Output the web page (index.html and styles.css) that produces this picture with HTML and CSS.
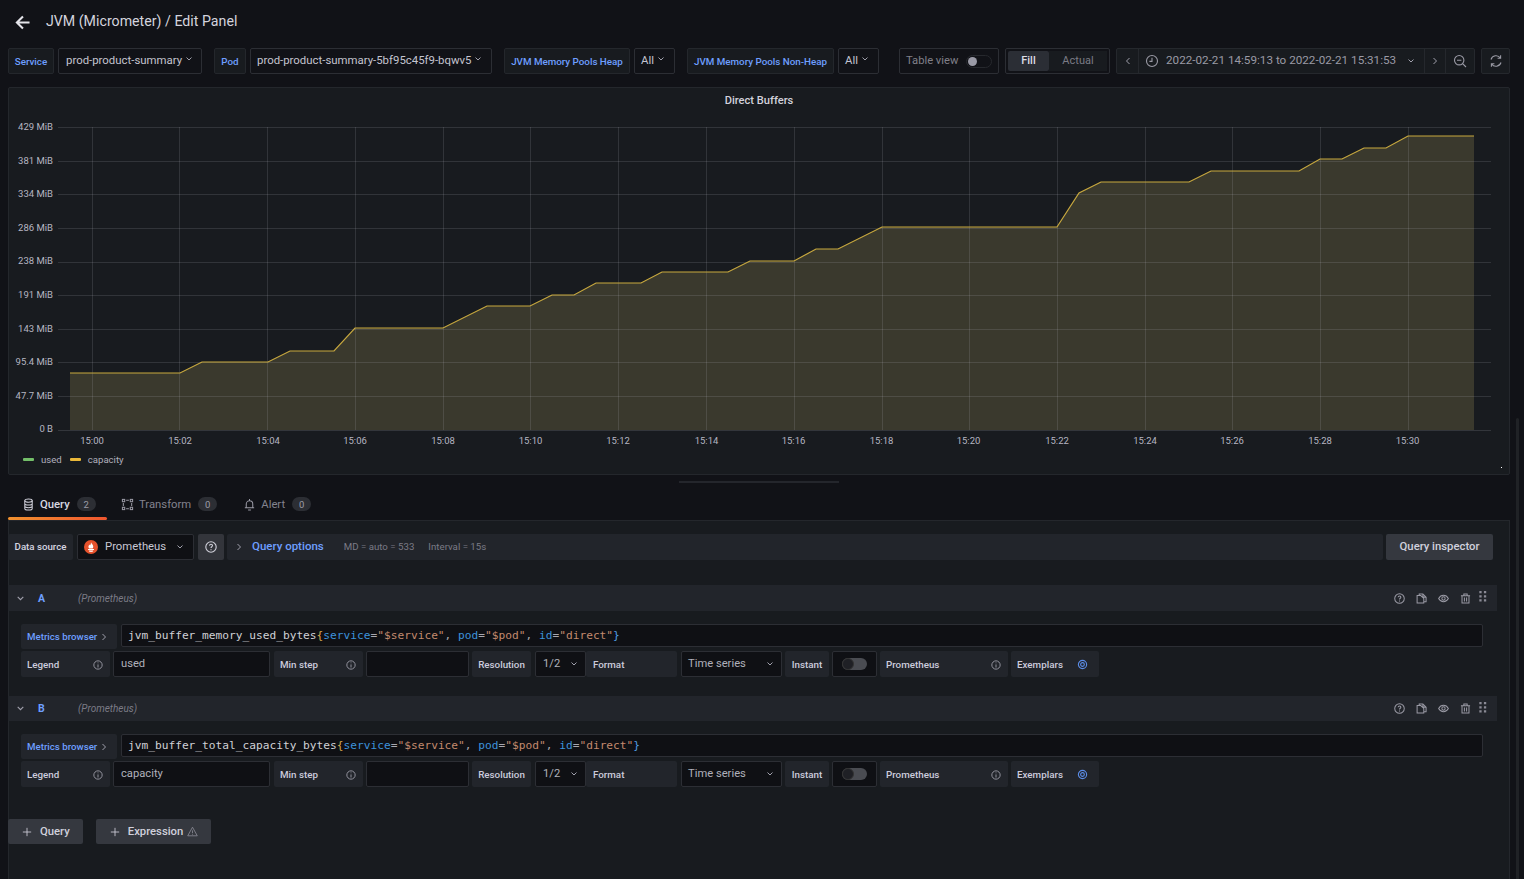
FILE: index.html
```html
<!DOCTYPE html>
<html lang="en">
<head>
<meta charset="utf-8">
<title>JVM (Micrometer) / Edit Panel</title>
<link rel="stylesheet" href="styles.css">
</head>
<body>
<div class="app">
  <header class="topbar">
    <svg class="back" viewBox="0 0 16 16"><path d="M15.500 8H2M8.500 1.500 2 8l6.500 6.500" fill="none" stroke="#e4e4ea" stroke-width="2.200"/></svg>
    <h1 class="title">JVM (Micrometer) / Edit Panel</h1>
  </header>

  <div class="toolbar">
    <div class="vargroup"><span class="varlabel w46">Service</span><span class="select w144">prod-product-summary<svg class="caret" viewBox="0 0 8 8"><path d="M1.5 2.5 4 5l2.5-2.5"/></svg></span></div>
    <div class="vargroup"><span class="varlabel w32">Pod</span><span class="select w242">prod-product-summary-5bf95c45f9-bqwv5<svg class="caret" viewBox="0 0 8 8"><path d="M1.5 2.5 4 5l2.5-2.5"/></svg></span></div>
    <div class="vargroup"><span class="varlabel w126">JVM Memory Pools Heap</span><span class="select w41">All<svg class="caret" viewBox="0 0 8 8"><path d="M1.5 2.5 4 5l2.5-2.5"/></svg></span></div>
    <div class="vargroup"><span class="varlabel w147">JVM Memory Pools Non-Heap</span><span class="select w41">All<svg class="caret" viewBox="0 0 8 8"><path d="M1.5 2.5 4 5l2.5-2.5"/></svg></span></div>
    <div class="tableview"><span class="tv-text">Table view</span><span class="switch"><span class="knob"></span></span></div>
    <div class="radio"><span class="radio-on"><span class="up1">Fill</span></span><span class="radio-off"><span class="up1">Actual</span></span></div>
    <div class="timepicker">
      <span class="tp-cell tp-arrow"><svg class="chev" viewBox="0 0 8 10"><path d="M5.5 2 2.5 5l3 3"/></svg></span>
      <span class="tp-cell tp-range">
        <svg class="ico14" viewBox="0 0 14 14"><circle cx="7" cy="7" r="5.5"/><path d="M7 3.8V7.4H4.4"/></svg>
        <span class="tp-text up1">2022-02-21 14:59:13 to 2022-02-21 15:31:53</span>
        <svg class="caret tp-caret" viewBox="0 0 8 8"><path d="M1.5 2.5 4 5l2.5-2.5"/></svg>
      </span>
      <span class="tp-cell tp-arrow2"><svg class="chev" viewBox="0 0 8 10"><path d="M2.5 2l3 3-3 3"/></svg></span>
      <span class="tp-zoom"><svg class="ico14" viewBox="0 0 14 14"><circle cx="6.2" cy="6.2" r="4.7"/><path d="M4 6.2h4.4M9.6 9.6 13 13"/></svg></span>
    </div>
    <span class="refresh"><svg class="ico14" viewBox="0 0 14 14"><path d="M2 5.5A5.3 5.3 0 0 1 11.4 4M12 8.5A5.3 5.3 0 0 1 2.6 10M11.6 1.2V4.2H8.6M2.4 12.8V9.8H5.4"/></svg></span>
  </div>

  <section class="panel">
    <div class="panel-title">Direct Buffers</div>
    <svg class="chart" viewBox="9 118 1500 330">
      <path class="area" d="M70 430V373H180L202 362H268L290 351H334L355 328H443L487 306H530L552 295H574L596 283H641L662 272H728L750 261H794L816 249H838L882 227H1057L1079 193L1101 182H1189L1211 171H1299L1320 159H1342L1364 148H1386L1408 136H1474V430Z"/>
      <path class="grid" d="M58 127.5H1491M58 161.500H1491M58 194.500H1491M58 228.500H1491M58 262.500H1491M58 295.500H1491M58 329.500H1491M58 362.500H1491M58 396.500H1491"/>
      <path class="grid" d="M92.500 127V430M179.500 127V430M267.500 127V430M355.500 127V430M443.500 127V430M530.500 127V430M618.500 127V430M706.500 127V430M794.500 127V430M882.500 127V430M969.500 127V430M1057.500 127V430M1145.500 127V430M1232.500 127V430M1320.500 127V430M1408.500 127V430"/>
      <path class="axis" d="M58 430.500H1491"/>
      <path class="line" d="M70 373H180L202 362H268L290 351H334L355 328H443L487 306H530L552 295H574L596 283H641L662 272H728L750 261H794L816 249H838L882 227H1057L1079 193L1101 182H1189L1211 171H1299L1320 159H1342L1364 148H1386L1408 136H1474"/>
      <g class="ylabels">
        <text x="53" y="130">429 MiB</text><text x="53" y="164">381 MiB</text><text x="53" y="197">334 MiB</text><text x="53" y="231">286 MiB</text><text x="53" y="264">238 MiB</text><text x="53" y="298">191 MiB</text><text x="53" y="332">143 MiB</text><text x="53" y="365">95.4 MiB</text><text x="53" y="399">47.7 MiB</text><text x="53" y="432">0 B</text>
      </g>
      <g class="xlabels">
        <text x="92" y="444">15:00</text><text x="180" y="444">15:02</text><text x="268" y="444">15:04</text><text x="355" y="444">15:06</text><text x="443" y="444">15:08</text><text x="530.500" y="444">15:10</text><text x="618" y="444">15:12</text><text x="706.500" y="444">15:14</text><text x="793.500" y="444">15:16</text><text x="881.500" y="444">15:18</text><text x="968.500" y="444">15:20</text><text x="1057" y="444">15:22</text><text x="1145" y="444">15:24</text><text x="1232" y="444">15:26</text><text x="1320" y="444">15:28</text><text x="1407.500" y="444">15:30</text>
      </g>
    </svg>
    <div class="legend">
      <span class="swatch swatch-green"></span><span class="legend-name">used</span>
      <span class="swatch swatch-yellow"></span><span class="legend-name">capacity</span>
    </div>
    <span class="corner-dot"></span>
  </section>

  <div class="splitter"><span class="splitter-bar"></span></div>

  <nav class="tabs">
    <span class="tab tab-active">
      <svg class="ico13 ico-bright" viewBox="0 0 12 14"><ellipse cx="6" cy="2.800" rx="4" ry="1.800"/><path d="M2 2.800v8.400c0 1 1.800 1.800 4 1.800s4-.8 4-1.800V2.800M2 5.800c0 1 1.800 1.800 4 1.800s4-.8 4-1.800M2 8.600c0 1 1.800 1.800 4 1.800s4-.8 4-1.800"/></svg>
      <span class="tab-name-on">Query</span><span class="count">2</span>
    </span>
    <span class="tab">
      <svg class="ico13" viewBox="0 0 14 14"><path d="M5.500 2.500h3M2.500 5.500v3M11.500 5.500v3M5.500 11.500h3"/><rect x="1.500" y="1.500" width="2.500" height="2.500"/><rect x="10" y="1.500" width="2.500" height="2.500"/><rect x="1.500" y="10" width="2.500" height="2.500"/><rect x="10" y="10" width="2.500" height="2.500"/></svg>
      <span class="tab-name">Transform</span><span class="count">0</span>
    </span>
    <span class="tab">
      <svg class="ico13" viewBox="0 0 14 14"><path d="M3.500 10V6.500a3.500 3.500 0 0 1 7 0V10M2 10.500h10M5.500 12.800h3M7 1v2"/></svg>
      <span class="tab-name">Alert</span><span class="count">0</span>
    </span>
  </nav>

  <main class="editor">
    <div class="ds-row">
      <span class="ds-label"><span class="up1">Data source</span></span>
      <span class="ds-select">
        <svg class="prom" viewBox="0 0 16 16"><circle cx="8" cy="8" r="8" fill="#e6522c"/><path d="M8 2.500c.4 1.800 2.600 2.600 2.600 5.200 0 .9-.4 1.500-.8 1.900H5.900c-.5-.4-.8-1-.8-1.900 0-1.200.8-1.600 1.100-2.600.4.400.6.800.6 1.300C7.500 5.200 8 4.200 8 2.500Z" fill="#fff"/><path d="M4.600 10.300h6.800v1.200H4.600ZM5.600 12h4.800v.9c-.8 1-4 1-4.800 0Z" fill="#fff"/></svg>
        <span class="ds-name up1">Prometheus</span>
        <svg class="caret ds-caret" viewBox="0 0 8 8"><path d="M1.500 2.500 4 5l2.500-2.500"/></svg>
      </span>
      <span class="ds-help"><svg class="ico12 ico-bright" viewBox="0 0 12 12"><circle cx="6" cy="6" r="5.200"/><path d="M4.500 4.600C4.600 3.700 5.200 3.300 6 3.300s1.500.5 1.500 1.300C7.500 5.800 6 5.700 6 7M6 8.300v.9"/></svg></span>
      <div class="ds-options">
        <svg class="chev ds-chev" viewBox="0 0 8 10"><path d="M2.500 2l3 3-3 3"/></svg>
        <span class="ds-qo up1">Query options</span>
        <span class="ds-meta ds-meta-1 up1">MD = auto = 533</span>
        <span class="ds-meta up1">Interval = 15s</span>
      </div>
      <span class="btn btn-inspector"><span class="up1">Query inspector</span></span>
    </div>

    <section class="qrow">
      <div class="qhead">
        <svg class="caret qcaret" viewBox="0 0 8 8"><path d="M1.500 2.500 4 5l2.500-2.500"/></svg>
        <span class="qletter">A</span><span class="qds">(Prometheus)</span>
        <span class="qactions">
          <svg class="ico11" viewBox="0 0 12 12"><circle cx="6" cy="6" r="5.200"/><path d="M4.500 4.600C4.600 3.700 5.200 3.300 6 3.300s1.500.5 1.500 1.300C7.500 5.800 6 5.700 6 7M6 8.300v.9"/></svg>
          <svg class="ico11" viewBox="0 0 12 12"><path d="M3.500 2.800V1h4l3.500 3.500v5H8.500M1.200 2.800h4L8.500 6v5H1.200ZM7.500 1v3.500H11"/></svg>
          <svg class="ico11" viewBox="0 0 12 12"><path d="M.7 6C2 3.600 3.900 2.500 6 2.500S10 3.600 11.300 6C10 8.400 8.100 9.500 6 9.500S2 8.400.7 6Z"/><circle cx="6" cy="6" r="1.800"/></svg>
          <svg class="ico11" viewBox="0 0 12 12"><path d="M1 3h10M4.200 3V1.200h3.600V3M2.200 3v8h7.600V3M4.800 5v4.200M7.200 5v4.200"/></svg>
          <svg class="grip" viewBox="0 0 8 12"><path d="M0 0h2.500v2.500H0ZM5 0h2.500v2.500H5ZM0 4.500h2.500V7H0ZM5 4.500h2.500V7H5ZM0 9h2.500v2.500H0ZM5 9h2.500v2.500H5Z"/></svg>
        </span>
      </div>
      <div class="qbody">
        <div class="qline-code">
          <span class="metrics">Metrics browser<svg class="chev metrics-chev" viewBox="0 0 8 10"><path d="M2.500 2l3 3-3 3"/></svg></span>
          <code class="code"><span class="c-name">jvm_buffer_memory_used_bytes</span><span class="c-brace">{</span><span class="c-key">service</span>=<span class="c-val">"$service"</span>, <span class="c-key">pod</span>=<span class="c-val">"$pod"</span>, <span class="c-key">id</span>=<span class="c-val">"direct"</span><span class="c-close">}</span></code>
        </div>
        <div class="qline-opts">
          <span class="opt w89">Legend<svg class="ico10 opt-i" viewBox="0 0 12 12"><circle cx="6" cy="6" r="5"/><path d="M6 3v.9M6 5.300V9"/></svg></span>
          <span class="input w157">used</span>
          <span class="opt w89 ml1">Min step<svg class="ico10 opt-i" viewBox="0 0 12 12"><circle cx="6" cy="6" r="5"/><path d="M6 3v.9M6 5.300V9"/></svg></span>
          <span class="input w103"></span>
          <span class="opt w59">Resolution</span>
          <span class="input w51 ml1">1/2<svg class="caret opt-caret" viewBox="0 0 8 8"><path d="M1.500 2.500 4 5l2.500-2.500"/></svg></span>
          <span class="opt w91 nogap">Format</span>
          <span class="input w101 ml1">Time series<svg class="caret opt-caret" viewBox="0 0 8 8"><path d="M1.500 2.500 4 5l2.500-2.500"/></svg></span>
          <span class="opt w44">Instant</span>
          <span class="input w45 center"><span class="toggle"><span class="toggle-knob"></span></span></span>
          <span class="opt w128">Prometheus<svg class="ico10 opt-i" viewBox="0 0 12 12"><circle cx="6" cy="6" r="5"/><path d="M6 3v.9M6 5.300V9"/></svg></span>
          <span class="opt w88">Exemplars<svg class="eye" viewBox="0 0 12 12"><circle cx="6" cy="6" r="4.500"/><circle cx="6" cy="6" r="2"/></svg></span>
        </div>
      </div>
    </section>

    <section class="qrow">
      <div class="qhead">
        <svg class="caret qcaret" viewBox="0 0 8 8"><path d="M1.500 2.500 4 5l2.500-2.500"/></svg>
        <span class="qletter">B</span><span class="qds">(Prometheus)</span>
        <span class="qactions">
          <svg class="ico11" viewBox="0 0 12 12"><circle cx="6" cy="6" r="5.200"/><path d="M4.500 4.600C4.600 3.700 5.200 3.300 6 3.300s1.500.5 1.500 1.300C7.500 5.800 6 5.700 6 7M6 8.300v.9"/></svg>
          <svg class="ico11" viewBox="0 0 12 12"><path d="M3.500 2.800V1h4l3.500 3.500v5H8.500M1.200 2.800h4L8.500 6v5H1.200ZM7.500 1v3.500H11"/></svg>
          <svg class="ico11" viewBox="0 0 12 12"><path d="M.7 6C2 3.600 3.900 2.500 6 2.500S10 3.600 11.300 6C10 8.400 8.100 9.500 6 9.500S2 8.400.7 6Z"/><circle cx="6" cy="6" r="1.800"/></svg>
          <svg class="ico11" viewBox="0 0 12 12"><path d="M1 3h10M4.200 3V1.200h3.600V3M2.200 3v8h7.600V3M4.800 5v4.200M7.200 5v4.200"/></svg>
          <svg class="grip" viewBox="0 0 8 12"><path d="M0 0h2.500v2.500H0ZM5 0h2.500v2.500H5ZM0 4.500h2.500V7H0ZM5 4.500h2.500V7H5ZM0 9h2.500v2.500H0ZM5 9h2.500v2.500H5Z"/></svg>
        </span>
      </div>
      <div class="qbody">
        <div class="qline-code">
          <span class="metrics">Metrics browser<svg class="chev metrics-chev" viewBox="0 0 8 10"><path d="M2.500 2l3 3-3 3"/></svg></span>
          <code class="code"><span class="c-name">jvm_buffer_total_capacity_bytes</span><span class="c-brace">{</span><span class="c-key">service</span>=<span class="c-val">"$service"</span>, <span class="c-key">pod</span>=<span class="c-val">"$pod"</span>, <span class="c-key">id</span>=<span class="c-val">"direct"</span><span class="c-close">}</span></code>
        </div>
        <div class="qline-opts">
          <span class="opt w89">Legend<svg class="ico10 opt-i" viewBox="0 0 12 12"><circle cx="6" cy="6" r="5"/><path d="M6 3v.9M6 5.300V9"/></svg></span>
          <span class="input w157">capacity</span>
          <span class="opt w89 ml1">Min step<svg class="ico10 opt-i" viewBox="0 0 12 12"><circle cx="6" cy="6" r="5"/><path d="M6 3v.9M6 5.300V9"/></svg></span>
          <span class="input w103"></span>
          <span class="opt w59">Resolution</span>
          <span class="input w51 ml1">1/2<svg class="caret opt-caret" viewBox="0 0 8 8"><path d="M1.500 2.500 4 5l2.500-2.500"/></svg></span>
          <span class="opt w91 nogap">Format</span>
          <span class="input w101 ml1">Time series<svg class="caret opt-caret" viewBox="0 0 8 8"><path d="M1.500 2.500 4 5l2.500-2.500"/></svg></span>
          <span class="opt w44">Instant</span>
          <span class="input w45 center"><span class="toggle"><span class="toggle-knob"></span></span></span>
          <span class="opt w128">Prometheus<svg class="ico10 opt-i" viewBox="0 0 12 12"><circle cx="6" cy="6" r="5"/><path d="M6 3v.9M6 5.300V9"/></svg></span>
          <span class="opt w88">Exemplars<svg class="eye" viewBox="0 0 12 12"><circle cx="6" cy="6" r="4.500"/><circle cx="6" cy="6" r="2"/></svg></span>
        </div>
      </div>
    </section>

    <div class="add-row">
      <span class="btn btn-add"><svg class="plus" viewBox="0 0 12 12"><path d="M6 1v10M1 6h10"/></svg>Query</span>
      <span class="btn btn-add"><svg class="plus" viewBox="0 0 12 12"><path d="M6 1v10M1 6h10"/></svg>Expression<svg class="warn" viewBox="0 0 12 12"><path d="M6 1.300.8 10.700h10.400ZM6 4.800v3M6 8.600v.8"/></svg></span>
    </div>
  </main>
</div>
<div class="scrolltrack"></div>
</body>
</html>
```

FILE: styles.css
```css
* { box-sizing: border-box; }
html, body { height: 100%; }
body {
  margin: 0;
  background: #111217;
  color: #ccccdc;
  font-family: Roboto, "Liberation Sans", sans-serif;
  font-size: 11.5px;
  overflow: hidden;
}
svg { flex: none; display: block; }
.up1 { padding-bottom: 2px; }
.app { display: flex; flex-direction: column; height: 879px; padding: 0 14px 0 8px; }

/* header */
.topbar { display: flex; align-items: center; height: 42px; flex: none; padding-left: 7px; }
.back { width: 15px; height: 15px; margin-top: 3px; }
.title { margin: 0 0 0 16px; font-size: 14.2px; font-weight: 400; color: #d4d4de; }

/* toolbar */
.toolbar { display: flex; height: 26px; margin-top: 6px; flex: none; width: 1502px; }
.vargroup { display: flex; gap: 4px; margin-right: 12px; }
.varlabel {
  display: flex; align-items: center; justify-content: center;
  background: #181b1f; border: 1px solid #24272c; border-radius: 2px;
  color: #6e9fff; font-size: 9.8px; font-weight: 500;
}
.select {
  display: flex; align-items: center; padding: 0 0 2px 6px;
  background: #111217; border: 1px solid #2c2e34; border-radius: 2px;
  color: #c4c4d0; font-size: 11.4px;
}
.w46 { width: 46px; } .w32 { width: 32px; } .w126 { width: 126px; } .w147 { width: 147px; }
.w144 { width: 144px; padding-left: 7px; } .w242 { width: 242px; } .w41 { width: 41px; }
.caret { width: 8px; height: 8px; }
.caret path, .chev path { fill: none; stroke: #a0a0ac; stroke-width: 1; }
.select .caret { margin: -2px 0 0 3px; }
.chev { width: 8px; height: 10px; }
.tableview {
  display: flex; align-items: center; width: 100px; margin-left: 8px; padding-left: 6px;
  border: 1px solid #2c2e34; border-radius: 2px; color: #808089; font-size: 11.2px;
}
.tv-text { padding-bottom: 2px; }
.switch {
  position: relative; width: 26px; height: 13px; margin-left: 8px;
  border: 1px solid #26282d; border-radius: 7px; background: #111217;
}
.knob { position: absolute; left: 1px; top: 1px; width: 9px; height: 9px; border-radius: 50%; background: #9a9aa6; }
.radio {
  display: flex; width: 105px; margin-left: 6px; padding: 2px;
  background: #111217; border: 1px solid #2c2e34; border-radius: 2px; font-size: 11px;
}
.radio-on { width: 41px; display: flex; align-items: center; justify-content: center; background: #2b2e35; color: #dcdce4; font-weight: 500; border-radius: 2px; }
.radio-off { flex: 1; display: flex; align-items: center; justify-content: center; color: #7b7b85; background: #181b1f; }
.timepicker {
  display: flex; width: 359px; margin-left: 6px;
  background: #181b1f; border: 1px solid #25282d; border-radius: 2px;
  color: #9a9aa5; font-size: 11.7px;
}
.tp-cell { display: flex; align-items: center; border-right: 1px solid #25282d; }
.tp-arrow { width: 22px; justify-content: center; }
.tp-arrow2 { width: 21px; justify-content: center; }
.tp-range { width: 286px; padding-left: 6px; }
.tp-text { margin-left: 7px; white-space: nowrap; }
.tp-caret { margin-left: 11px; }
.tp-zoom { flex: 1; display: flex; align-items: center; justify-content: center; }
.refresh {
  display: flex; align-items: center; justify-content: center; width: 29px; margin-left: 6px;
  background: #181b1f; border: 1px solid #25282d; border-radius: 2px;
}
.ico14 { width: 14px; height: 14px; }
.ico10 { width: 10px; height: 10px; }
.ico14 path, .ico14 circle,
.ico13 path, .ico13 rect, .ico13 ellipse,
.ico12 path, .ico12 circle,
.ico11 path, .ico11 circle,
.ico10 path, .ico10 circle { fill: none; stroke: #9a9aa5; stroke-width: 1.1; }
.ico-bright path, .ico-bright circle, .ico-bright ellipse { stroke: #d0d0da; }

/* panel */
.panel {
  position: relative; flex: none; width: 1502px; height: 388px; margin-top: 13px;
  display: flex; flex-direction: column;
  background: #181b1f; border: 1px solid #24272c; border-radius: 2px;
}
.panel-title { height: 30px; flex: none; padding-top: 7px; text-align: center; font-size: 11.1px; font-weight: 500; color: #d2d2dc; line-height: 12px; }
.chart { width: 1500px; height: 330px; }
.area { fill: #3a392d; }
.grid { fill: none; stroke: rgba(204, 204, 220, .14); stroke-width: 1; }
.axis { fill: none; stroke: #33363b; stroke-width: 1; }
.line { fill: none; stroke: #c8a93f; stroke-width: 1.2; }
.ylabels text { text-anchor: end; font-size: 9.5px; fill: #b6b6c2; font-family: Roboto, sans-serif; }
.xlabels text { text-anchor: middle; font-size: 9.5px; fill: #b6b6c2; font-family: Roboto, sans-serif; }
.legend { display: flex; align-items: center; height: 26px; padding: 0 0 4px 14px; font-size: 9.6px; color: #b0b0bc; }
.swatch { width: 11px; height: 3px; border-radius: 1px; margin-right: 7px; }
.swatch-green { background: #73bf69; }
.swatch-yellow { background: #eab839; }
.legend-name { margin-right: 8px; }
.corner-dot { position: absolute; right: 7px; bottom: 6px; width: 1px; height: 1px; background: #fff; }
.splitter { height: 13px; flex: none; display: flex; align-items: center; justify-content: center; width: 1502px; }
.splitter-bar { width: 160px; height: 2px; background: #24262c; }

/* tabs */
.tabs { display: flex; flex: none; height: 33px; width: 1502px; border-bottom: 1px solid #202226; }
.tab { display: flex; align-items: center; height: 32px; padding: 1px 0; margin-right: 26px; color: #83838e; font-size: 11.3px; }
.tab-active { width: 99px; margin-right: 14px; padding-left: 14px; position: relative; color: #d8d8e2; }
.tab-active::after { content: ""; position: absolute; left: 0; right: 0; bottom: 0; height: 3px; background: linear-gradient(90deg, #f0912f, #f0562f); border-radius: 2px; }
.ico13 { width: 13px; height: 13px; margin-right: 5px; }
.tab-name-on { font-weight: 500; }
.count { min-width: 19px; height: 14px; margin-left: 7px; padding: 0 5px; border-radius: 8px; background: #2c2e34; text-align: center; font-size: 9.5px; line-height: 15px; color: #9c9ca8; }

/* editor */
.editor { flex: 1; width: 1502px; padding: 13px 16px 0 0; background: #181b1f; border: 1px solid #24272c; border-bottom: 0; margin-top: -1px; position: relative; }
.ds-row { display: flex; height: 26px; }
.ds-label { width: 65px; display: flex; align-items: center; justify-content: center; background: #22252b; border-radius: 2px; font-size: 9.7px; font-weight: 500; color: #d6d6e0; margin-left: -1px; }
.ds-select { display: flex; align-items: center; width: 117px; margin-left: 4px; padding-left: 6px; background: #0f1014; border: 1px solid #2c2e34; border-radius: 2px; color: #c8c8d4; font-size: 11.3px; }
.prom { width: 14px; height: 14px; }
.ds-name { margin-left: 7px; }
.ds-caret { margin-left: 10px; }
.ds-help { display: flex; align-items: center; justify-content: center; width: 26px; margin-left: 4px; background: #33353b; border-radius: 2px; }
.ico12 { width: 12px; height: 12px; }
.ds-options { display: flex; align-items: center; flex: 1; margin-left: 3px; background: #22252b; border-radius: 2px; padding-left: 8px; }
.ds-chev { margin-right: 9px; }
.ds-qo { color: #6e9fff; font-size: 11.5px; font-weight: 500; }
.ds-meta { color: #7b7b86; font-size: 9.7px; }
.ds-meta-1 { margin: 0 14px 0 20px; }
.btn { display: flex; align-items: center; background: #35383f; border-radius: 2px; color: #d0d0dc; font-size: 11.3px; font-weight: 500; }
.btn-inspector { width: 107px; margin-left: 3px; justify-content: center; }

.qrow { margin-top: 25px; width: 1488px; }
.qrow + .qrow { margin-top: 19px; }
.qrow + .qrow .qhead { height: 25px; }
.qhead { display: flex; align-items: center; height: 26px; background: #22252b; padding-left: 8px; margin-left: -1px; }
.qcaret { width: 9px; height: 9px; }
.qletter { width: 40px; margin-left: 13px; color: #6e9fff; font-size: 10.5px; font-weight: 700; }
.qds { color: #7b7b86; font-size: 10px; font-style: italic; }
.qactions { display: flex; align-items: center; gap: 11px; margin-left: auto; padding-right: 10px; }
.ico11 { width: 11px; height: 11px; }
.grip { width: 8px; height: 11px; margin: -3px 0 0 -3px; fill: #8a8a95; }
.qbody { padding: 13px 0 0 12px; }
.qline-code { display: flex; height: 25px; gap: 4px; }
.metrics { display: flex; align-items: center; width: 96px; padding-left: 6px; background: #22252b; border-radius: 2px; color: #6e9fff; font-size: 9.7px; font-weight: 500; white-space: nowrap; }
.metrics-chev { margin-left: 3px; }
.code { flex: 1; display: flex; align-items: center; margin: 0 14px 2px 0; padding-left: 6px; background: #0f1014; border: 1px solid #2c2e34; border-radius: 2px; font-family: "DejaVu Sans Mono", monospace; font-size: 11.19px; color: #a8a8b0; white-space: pre; }
.c-name { color: #d0d0d6; }
.c-brace { color: #d6a94e; }
.c-key { color: #3d92db; }
.c-val { color: #c28a6e; }
.c-close { color: #4f9be0; }
.qline-opts { display: flex; height: 26px; gap: 3px; margin-top: 2px; }
.opt { display: flex; align-items: center; padding: 1px 0 0 6px; background: #22252b; border-radius: 2px; font-size: 9.8px; font-weight: 500; color: #ccd; white-space: nowrap; }
.opt-i { margin-left: auto; margin-right: 7px; }
.input { display: flex; align-items: center; padding: 0 7px 1px; background: #0f1014; border: 1px solid #2c2e34; border-radius: 2px; font-size: 11.2px; color: #b0b0bb; }
.input .caret { margin-left: auto; }
.opt-caret { width: 8px; height: 8px; }
.ml1 { margin-left: 1px; }
.nogap { margin-left: -3px; padding-left: 7px; }
.center { justify-content: center; }
.w89 { width: 89px; } .w157 { width: 157px; } .w103 { width: 103px; } .w59 { width: 59px; justify-content: center; padding-left: 0; }
.w51 { width: 51px; } .w91 { width: 91px; } .w101 { width: 101px; padding-left: 6px; } .w44 { width: 44px; justify-content: center; padding-left: 0; }
.w45 { width: 45px; } .w128 { width: 128px; } .w88 { width: 88px; }
.toggle { display: block; position: relative; width: 25px; height: 12px; border-radius: 7px; background: #4a4c52; }
.toggle-knob { position: absolute; left: 0; top: 0; width: 12px; height: 12px; border-radius: 50%; background: #1f2025; border: 1px solid #333; }
.eye { width: 11px; height: 11px; margin-left: 14px; }
.eye circle { fill: none; stroke: #5b8de8; stroke-width: 1.2; }

.add-row { display: flex; gap: 13px; height: 25px; margin: 32px 0 0 -1px; }
.btn-add { padding: 0 13px 0 14px; }
.plus { width: 10px; height: 10px; margin-right: 8px; }
.plus path { stroke: #d0d0dc; stroke-width: 1; fill: none; }
.warn { width: 11px; height: 11px; margin-left: 4px; }
.warn path { fill: none; stroke: #8c8c96; stroke-width: .9; }
.scrolltrack { position: absolute; right: 5px; top: 418px; bottom: 0; width: 3px; background: #202226; border-radius: 2px 2px 0 0; }
```
